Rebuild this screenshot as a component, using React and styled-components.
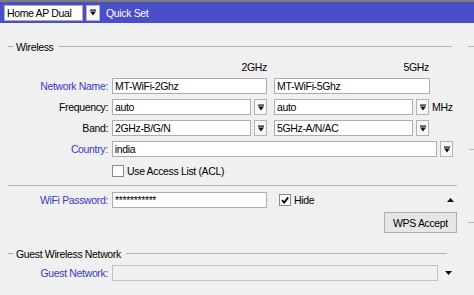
import React from "react";
import styled, { createGlobalStyle } from "styled-components";

const GlobalStyle = createGlobalStyle`
  html, body { margin: 0; padding: 0; background: #f0f0f0; }
  body {
    width: 474px; height: 295px; overflow: hidden;
    font-family: "Liberation Sans", Arial, sans-serif;
    font-size: 10.5px; letter-spacing: -0.35px; color: #000;
  }
`;

const TopBar = styled.div`
  height: 21px;
  border-top: 2px solid #7c7c7c;
  background: #4a4ec8;
  display: flex;
  align-items: center;
  padding-left: 4px;
  gap: 6px;
`;

const TopTitle = styled.span`
  color: #fff;
  font-size: 10.5px;
`;

const Content = styled.div`
  padding-left: 8px;
`;

const Row = styled.div`
  display: flex;
  align-items: center;
  height: ${p => p.$h ?? 16}px;
  margin-top: ${p => p.$mt ?? 5}px;
`;

const GroupHeader = styled.div`
  flex: 1;
  display: flex;
  align-items: center;
  height: 13px;
  margin-right: ${p => p.$mr}px;
  &::before {
    content: "";
    width: 5px;
    border-top: 1px solid #a9a9a9;
    margin-right: 3px;
  }
  &::after {
    content: "";
    flex: 1;
    border-top: 1px solid #b4b4b4;
    margin-left: 5px;
  }
`;

const Tail = styled.span`
  width: ${p => p.$w ?? 6}px;
  border-top: 1px solid #b4b4b4;
  margin-left: ${p => p.$ml ?? 0}px;
`;

const Label = styled.span`
  width: 100px;
  margin-right: 4px;
  text-align: right;
  white-space: nowrap;
  color: ${p => (p.$blue ? "#3a3ac4" : "#000")};
`;

const Spacer = styled.span`
  width: ${p => p.$w}px;
  flex: none;
`;

const ColHead = styled.span`
  width: 155px;
  text-align: right;
  margin-right: ${p => p.$mr ?? 0}px;
`;

const Field = styled.input`
  box-sizing: border-box;
  width: ${p => (p.$w ? `${p.$w}px` : "auto")};
  flex: ${p => (p.$w ? "none" : "1")};
  min-width: 0;
  height: 16px;
  margin: 0 ${p => p.$mr ?? 0}px 0 0;
  padding: 0 2px;
  border: 1px solid ${p => (p.disabled ? "#c2c2c2" : "#abadb3")};
  background: ${p => (p.disabled ? "#f0f0f0" : "#fff")};
  font: inherit;
  letter-spacing: inherit;
  color: #000;
  outline: none;
`;

const SelectBox = styled.div`
  display: flex;
  align-items: center;
  gap: 3px;
  width: ${p => p.$w}px;
  margin-right: ${p => p.$mr ?? 0}px;
`;

const DropBtn = styled.span`
  box-sizing: border-box;
  width: ${p => p.$w ?? 13}px;
  height: 16px;
  flex: none;
  border: 1px solid #b4b4b4;
  background: #f7f7f7;
  display: flex;
  align-items: center;
  justify-content: center;
`;

const Unit = styled.span`
  margin-left: 3px;
`;

const Box = styled.span`
  box-sizing: border-box;
  width: 12px;
  height: 12px;
  flex: none;
  border: 1px solid #8a8a8a;
  background: #fff;
  margin-left: ${p => p.$ml ?? 0}px;
  margin-right: 3px;
  display: flex;
  align-items: center;
  justify-content: center;
`;

const Separator = styled.div`
  width: 449px;
  margin-top: 8px;
  border-top: 1px solid #b4b4b4;
`;

const Arrow = styled.svg`
  margin-left: auto;
  margin-right: ${p => p.$mr}px;
  flex: none;
`;

const Button = styled.button`
  box-sizing: border-box;
  margin-left: auto;
  width: 73px;
  height: 21px;
  border: 1px solid #adadad;
  background: #e6e6e6;
  font: inherit;
  font-size: 10.5px;
  letter-spacing: inherit;
  color: #000;
  padding: 0;
`;

const DropIcon = () => (
  <svg width="6" height="7" viewBox="0 0 6 7">
    <rect x="0" y="0.5" width="6" height="1.2" fill="#111" />
    <path d="M0 2.6 H6 L3 6.4 Z" fill="#111" />
  </svg>
);

const Select = ({ value, w, mr, btn }) => (
  <SelectBox $w={w} $mr={mr}>
    <Field readOnly value={value} />
    <DropBtn $w={btn}>
      <DropIcon />
    </DropBtn>
  </SelectBox>
);

export default function App() {
  return (
    <>
      <GlobalStyle />
      <TopBar>
        <SelectBox $w={96}>
          <Field readOnly value="Home AP Dual" />
          <DropBtn $w={14}>
            <DropIcon />
          </DropBtn>
        </SelectBox>
        <TopTitle>Quick Set</TopTitle>
      </TopBar>

      <Content>
        <Row $h={13} $mt={17}>
          <GroupHeader $mr={0}>Wireless</GroupHeader>
          <Tail $ml={16} />
        </Row>

        <Row $h={13} $mt={7}>
          <Spacer $w={104} />
          <ColHead $mr={7}>2GHz</ColHead>
          <ColHead>5GHz</ColHead>
        </Row>

        <Row>
          <Label $blue>Network Name:</Label>
          <Field readOnly $w={155} $mr={7} value="MT-WiFi-2Ghz" />
          <Field readOnly $w={156} value="MT-WiFi-5Ghz" />
        </Row>

        <Row>
          <Label>Frequency:</Label>
          <Select value="auto" w={155} mr={7} />
          <Select value="auto" w={155} />
          <Unit>MHz</Unit>
        </Row>

        <Row>
          <Label>Band:</Label>
          <Select value="2GHz-B/G/N" w={155} mr={7} />
          <Select value="5GHz-A/N/AC" w={155} />
        </Row>

        <Row>
          <Label $blue>Country:</Label>
          <Select value="india" w={342} />
          <Tail $w={5} $ml={16} />
        </Row>

        <Row $h={12} $mt={8}>
          <Spacer $w={104} />
          <Box />
          <span>Use Access List (ACL)</span>
        </Row>

        <Separator />

        <Row $mt={6}>
          <Label $blue>WiFi Password:</Label>
          <Field readOnly $w={155} value="***********" />
          <Box $ml={12}>
            <svg width="10" height="10" viewBox="0 0 10 10">
              <polyline points="2,5.2 4.2,7.6 8.2,2.4" fill="none" stroke="#000" strokeWidth="1.8" />
            </svg>
          </Box>
          <span>Hide</span>
          <Arrow $mr={20} width="7" height="4" viewBox="0 0 7 4">
            <path d="M0 4 L3.5 0 L7 4 Z" fill="#111" />
          </Arrow>
        </Row>

        <Row $h={21} $mt={4}>
          <Button>WPS Accept</Button>
          <Tail $ml={11} />
        </Row>

        <Row $h={13} $mt={14}>
          <GroupHeader $mr={27}>Guest Wireless Network</GroupHeader>
        </Row>

        <Row $mt={5}>
          <Label $blue>Guest Network:</Label>
          <Field disabled readOnly $w={326} value="" />
          <Arrow $mr={22} width="7" height="4" viewBox="0 0 7 4">
            <path d="M0 0 L7 0 L3.5 4 Z" fill="#111" />
          </Arrow>
        </Row>
      </Content>
    </>
  );
}
